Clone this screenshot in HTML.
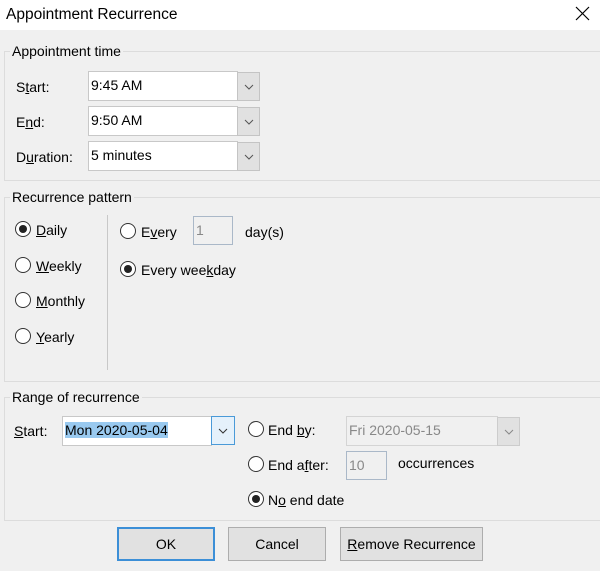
<!DOCTYPE html><html><head><style>
body{margin:0;width:600px;height:571px;background:#f0f0f0;font-family:"Liberation Sans",sans-serif;font-size:14px;color:#000;position:relative;overflow:hidden}
.a{position:absolute}
.t{position:absolute;white-space:nowrap;line-height:16px}
.grp{position:absolute;border:1px solid #dcdcdc;left:4px;width:600px}
.lbl{position:absolute;background:#f0f0f0;padding:0 2px;left:5px;top:-9px;line-height:16px}
.box{position:absolute;background:#fff;border:1px solid #c8c8c8;box-sizing:border-box;padding:5px 2px;line-height:16px}
.btn{position:absolute;background:#e1e1e1;border:1px solid #c4c4c4;box-sizing:border-box}
.btn svg{position:absolute;left:50%;top:50%;margin:-3px 0 0 -5px}
.r{position:absolute;width:16px;height:16px;border:1px solid #333;border-radius:50%;box-sizing:border-box;background:#fff}
.r.on::after{content:"";position:absolute;left:3px;top:3px;width:8px;height:8px;border-radius:50%;background:#222}
.pb{position:absolute;background:#e1e1e1;border:1px solid #adadad;box-sizing:border-box;text-align:center;line-height:32px}
u{text-decoration:underline}
</style></head><body>
<div class="a" style="left:0;top:0;width:600px;height:30px;background:#fff"></div>
<div class="t" style="left:6px;top:6px;font-size:15.5px;line-height:18px">Appointment Recurrence</div>
<svg class="a" style="left:575px;top:6px" width="15" height="15"><path d="M1 1L14 14M14 1L1 14" stroke="#000" stroke-width="1.2"/></svg>

<div class="grp" style="top:51px;height:128px"><span class="lbl">Appointment time</span></div>
<div class="t" style="left:16px;top:79px">S<u>t</u>art:</div>
<div class="box" style="left:88px;top:71px;width:150px;height:30px">9:45 AM</div>
<div class="btn" style="left:237px;top:72px;width:23px;height:29px"><svg width="10" height="6"><path d="M1 1L5 5L9 1" stroke="#555" fill="none"/></svg></div>
<div class="t" style="left:16px;top:114px">E<u>n</u>d:</div>
<div class="box" style="left:88px;top:106px;width:150px;height:30px">9:50 AM</div>
<div class="btn" style="left:237px;top:107px;width:23px;height:29px"><svg width="10" height="6"><path d="M1 1L5 5L9 1" stroke="#555" fill="none"/></svg></div>
<div class="t" style="left:16px;top:149px">D<u>u</u>ration:</div>
<div class="box" style="left:88px;top:141px;width:150px;height:30px">5 minutes</div>
<div class="btn" style="left:237px;top:142px;width:23px;height:29px"><svg width="10" height="6"><path d="M1 1L5 5L9 1" stroke="#555" fill="none"/></svg></div>

<div class="grp" style="top:197px;height:183px"><span class="lbl">Recurrence pattern</span></div>
<div class="r on" style="left:15px;top:221px"></div><div class="t" style="left:36px;top:222px"><u>D</u>aily</div>
<div class="r" style="left:15px;top:257px"></div><div class="t" style="left:36px;top:258px"><u>W</u>eekly</div>
<div class="r" style="left:15px;top:292px"></div><div class="t" style="left:36px;top:293px"><u>M</u>onthly</div>
<div class="r" style="left:15px;top:328px"></div><div class="t" style="left:36px;top:329px"><u>Y</u>early</div>
<div class="a" style="left:107px;top:215px;width:1px;height:155px;background:#c8c8c8"></div>
<div class="r" style="left:120px;top:223px"></div><div class="t" style="left:141px;top:224px">E<u>v</u>ery</div>
<div class="box" style="left:193px;top:216px;width:40px;height:29px;background:#f0f0f0;border-color:#aab8c8;color:#888">1</div>
<div class="t" style="left:245px;top:224px">day(s)</div>
<div class="r on" style="left:120px;top:261px"></div><div class="t" style="left:141px;top:262px">Every wee<u>k</u>day</div>

<div class="grp" style="top:397px;height:122px"><span class="lbl">Range of recurrence</span></div>
<div class="t" style="left:14px;top:423px"><u>S</u>tart:</div>
<div class="box" style="left:62px;top:416px;width:150px;height:30px;padding-left:2px"><span style="background:#99c9ef">Mon 2020-05-04</span></div>
<div class="btn" style="left:211px;top:416px;width:24px;height:29px;background:#e5f1fb;border-color:#4a9ad8"><svg width="10" height="6"><path d="M1 1L5 5L9 1" stroke="#333" fill="none"/></svg></div>
<div class="r" style="left:248px;top:421px"></div><div class="t" style="left:268px;top:422px">End <u>b</u>y:</div>
<div class="box" style="left:346px;top:416px;width:152px;height:30px;background:#f0f0f0;border-color:#d4d4d4;color:#888">Fri 2020-05-15</div>
<div class="btn" style="left:497px;top:417px;width:23px;height:29px;border-color:#ccc"><svg width="10" height="6"><path d="M1 1L5 5L9 1" stroke="#888" fill="none"/></svg></div>
<div class="r" style="left:248px;top:456px"></div><div class="t" style="left:268px;top:457px">End a<u>f</u>ter:</div>
<div class="box" style="left:346px;top:451px;width:41px;height:29px;background:#f0f0f0;border-color:#aab8c8;color:#888">10</div>
<div class="t" style="left:398px;top:455px">occurrences</div>
<div class="r on" style="left:248px;top:491px"></div><div class="t" style="left:268px;top:492px">N<u>o</u> end date</div>

<div class="pb" style="left:117px;top:527px;width:98px;height:34px;border:2px solid #3c8fd7;line-height:30px">OK</div>
<div class="pb" style="left:228px;top:527px;width:98px;height:34px">Cancel</div>
<div class="pb" style="left:340px;top:527px;width:143px;height:34px"><u>R</u>emove Recurrence</div>
</body></html>
